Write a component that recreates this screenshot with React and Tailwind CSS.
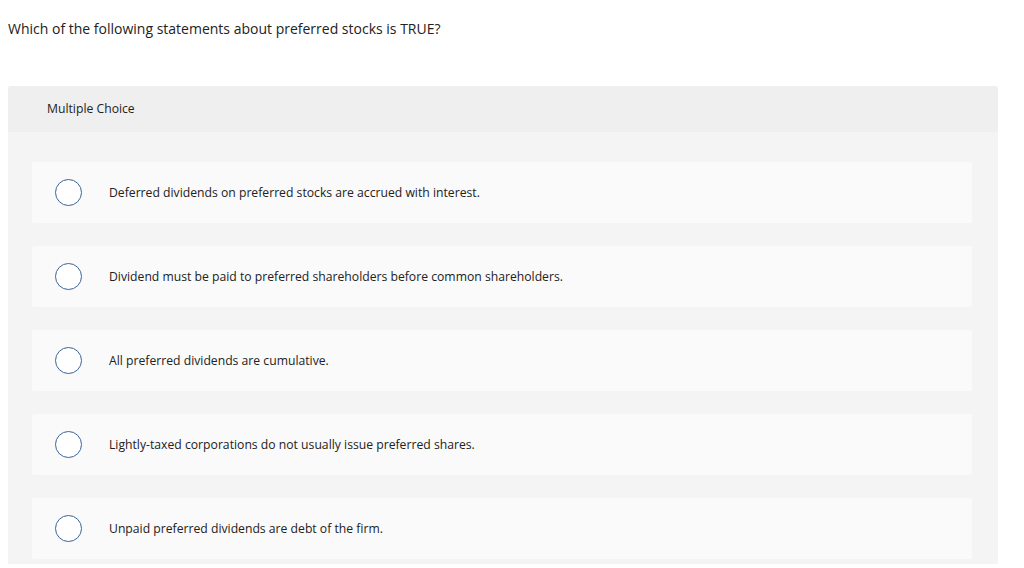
import React from "react";

const options = [
  "Deferred dividends on preferred stocks are accrued with interest.",
  "Dividend must be paid to preferred shareholders before common shareholders.",
  "All preferred dividends are cumulative.",
  "Lightly-taxed corporations do not usually issue preferred shares.",
  "Unpaid preferred dividends are debt of the firm.",
];

export default function App() {
  return (
    <div
      className="w-[1024px] h-[568px] overflow-hidden bg-white text-[#222]"
      style={{ fontFamily: '"Open Sans", "Liberation Sans", Arial, sans-serif' }}
    >
      <div className="pl-[8px] pt-[19px] h-[86px] text-[14px] leading-[19px] text-[#222]">
        Which of the following statements about preferred stocks is TRUE?
      </div>
      <div className="ml-[8px] w-[990px] rounded-t-[3px] bg-[#f4f4f4] pb-[5px]">
        <div className="h-[46px] flex items-center pl-[39px] pt-[1px] bg-[#efefef] rounded-t-[3px] text-[12.2px] text-[#222]">
          Multiple Choice
        </div>
        <div className="pt-[30px] px-[24px] flex flex-col gap-[23px]">
          {options.map((o) => (
            <div
              key={o}
              className="h-[61px] w-[940px] bg-[#fafafa] rounded-[3px] flex items-center"
            >
              <div className="ml-[23px] w-[27px] h-[27px] rounded-full border-[1.5px] border-[#3b6396] bg-white shrink-0" />
              <div className="ml-[27px] mt-[2px] text-[12.2px] text-[#222]">{o}</div>
            </div>
          ))}
        </div>
      </div>
    </div>
  );
}
